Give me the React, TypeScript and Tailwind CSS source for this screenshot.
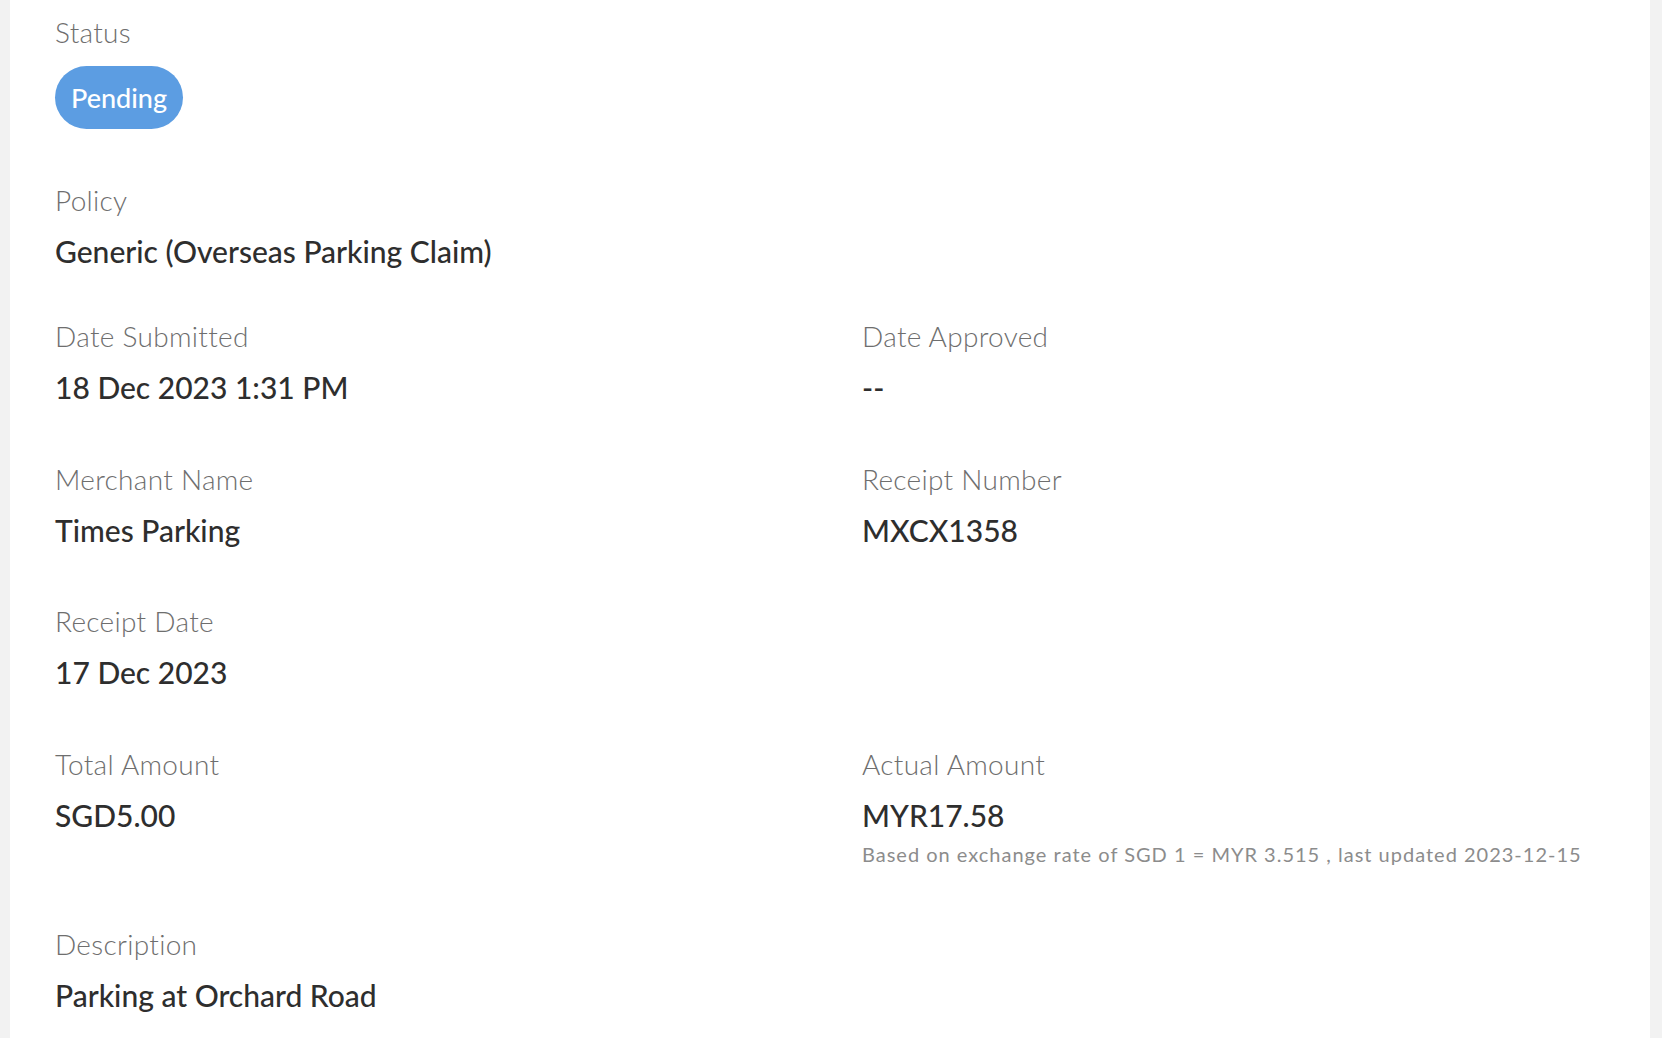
import React from 'react';

type FieldProps = {
  label: string;
  value: string;
  note?: string;
};

function Field({ label, value, note }: FieldProps) {
  return (
    <div className="flex flex-col">
      <div className="text-[28px] leading-[34px] font-light tracking-[0.3px] text-[#6e6e6e]">{label}</div>
      <div className="mt-4 text-[30px] leading-[36px] font-medium text-[#2e2e2e]">{value}</div>
      {note && (
        <div className="mt-[9px] text-[20px] leading-[24px] tracking-[1px] text-[#8c8c8c]">{note}</div>
      )}
    </div>
  );
}

export default function App() {
  return (
    <div
      className="min-h-screen bg-[#f2f2f2] px-[10px]"
      style={{ fontFamily: "Lato, 'Open Sans', sans-serif" }}
    >
      <div className="min-h-screen w-[1640px] bg-white pl-[45px] pt-[15px] pb-8">
        {/* status */}
        <div className="flex flex-col items-start">
          <div className="text-[28px] leading-[34px] font-light tracking-[0.3px] text-[#6e6e6e]">Status</div>
          <span className="mt-[17px] flex h-[63px] w-[128px] items-center justify-center rounded-full bg-[#5c9de2] pt-[2px] text-[27px] font-medium text-white">
            Pending
          </span>
        </div>

        <div className="mt-[54px]">
          <Field label="Policy" value="Generic (Overseas Parking Claim)" />
        </div>

        <div className="mt-[50px] grid grid-cols-[807px_1fr] gap-y-[56.7px]">
          <Field label="Date Submitted" value="18 Dec 2023 1:31 PM" />
          <Field label="Date Approved" value="--" />
          <Field label="Merchant Name" value="Times Parking" />
          <Field label="Receipt Number" value="MXCX1358" />
          <Field label="Receipt Date" value="17 Dec 2023" />
          <div />
          <Field label="Total Amount" value="SGD5.00" />
          <Field
            label="Actual Amount"
            value="MYR17.58"
            note="Based on exchange rate of SGD 1 = MYR 3.515 , last updated 2023-12-15"
          />
        </div>

        <div className="mt-[61px]">
          <Field label="Description" value="Parking at Orchard Road" />
        </div>
      </div>
    </div>
  );
}
